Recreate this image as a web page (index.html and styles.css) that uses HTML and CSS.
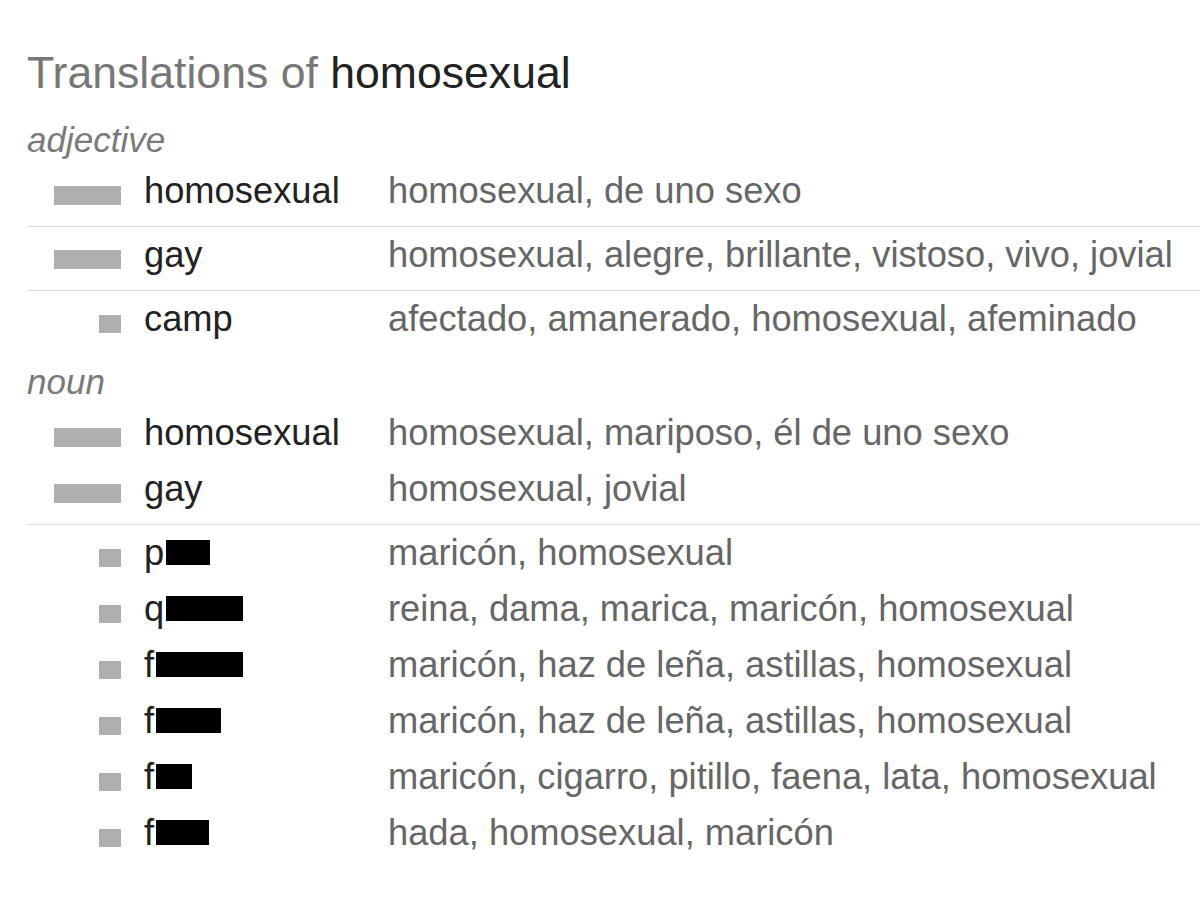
FILE: index.html
```html
<!DOCTYPE html>
<html lang="en">
<head>
<meta charset="utf-8">
<title>Translations of homosexual</title>
<link rel="stylesheet" href="styles.css">
</head>
<body>
<main class="panel">
  <h1 class="title">Translations of <span class="term">homosexual</span></h1>

  <section class="group">
    <div class="pos">adjective</div>
    <div class="row">
      <div class="freq"><span class="bar bar-big"></span></div>
      <div class="word">homosexual</div>
      <div class="trans">homosexual, de uno sexo</div>
    </div>
    <div class="row sep">
      <div class="freq"><span class="bar bar-big"></span></div>
      <div class="word">gay</div>
      <div class="trans">homosexual, alegre, brillante, vistoso, vivo, jovial</div>
    </div>
    <div class="row sep">
      <div class="freq"><span class="bar bar-small"></span></div>
      <div class="word">camp</div>
      <div class="trans">afectado, amanerado, homosexual, afeminado</div>
    </div>
  </section>

  <section class="group">
    <div class="pos">noun</div>
    <div class="row">
      <div class="freq"><span class="bar bar-big"></span></div>
      <div class="word">homosexual</div>
      <div class="trans">homosexual, mariposo, él de uno sexo</div>
    </div>
    <div class="row">
      <div class="freq"><span class="bar bar-big"></span></div>
      <div class="word">gay</div>
      <div class="trans">homosexual, jovial</div>
    </div>
    <div class="row sep">
      <div class="freq"><span class="bar bar-small"></span></div>
      <div class="word">p<span class="redact r-1"></span></div>
      <div class="trans">maricón, homosexual</div>
    </div>
    <div class="row">
      <div class="freq"><span class="bar bar-small"></span></div>
      <div class="word">q<span class="redact r-2"></span></div>
      <div class="trans">reina, dama, marica, maricón, homosexual</div>
    </div>
    <div class="row">
      <div class="freq"><span class="bar bar-small"></span></div>
      <div class="word">f<span class="redact r-3"></span></div>
      <div class="trans">maricón, haz de leña, astillas, homosexual</div>
    </div>
    <div class="row">
      <div class="freq"><span class="bar bar-small"></span></div>
      <div class="word">f<span class="redact r-4"></span></div>
      <div class="trans">maricón, haz de leña, astillas, homosexual</div>
    </div>
    <div class="row">
      <div class="freq"><span class="bar bar-small"></span></div>
      <div class="word">f<span class="redact r-5"></span></div>
      <div class="trans">maricón, cigarro, pitillo, faena, lata, homosexual</div>
    </div>
    <div class="row">
      <div class="freq"><span class="bar bar-small"></span></div>
      <div class="word">f<span class="redact r-6"></span></div>
      <div class="trans">hada, homosexual, maricón</div>
    </div>
  </section>
</main>
</body>
</html>
```

FILE: styles.css
```css
html, body {
  margin: 0;
  padding: 0;
  background: #ffffff;
}

body {
  font-family: "Liberation Sans", Arial, Helvetica, sans-serif;
  width: 1200px;
  height: 900px;
  overflow: hidden;
}

.panel {
  padding: 47px 0 0 27px;
}

.title {
  margin: 0 0 18px 0;
  font-size: 44.6px;
  line-height: 52px;
  font-weight: normal;
  color: #777777;
  white-space: nowrap;
}

.term {
  color: #222222;
}

.group + .group {
  margin-top: 12px;
}

.pos {
  font-size: 35px;
  line-height: 46px;
  font-style: italic;
  color: #7a7a7a;
}

.row {
  display: grid;
  grid-template-columns: 117px 244px 1fr;
  font-size: 36.3px;
  line-height: 56px;
  white-space: nowrap;
}

.row.sep {
  margin-top: 7px;
  border-top: 1px solid #dddddd;
}

.freq {
  text-align: right;
  padding-right: 23px;
}

.bar {
  display: inline-block;
  background: #afafaf;
  vertical-align: baseline;
  margin-bottom: -2px;
}

.bar-big {
  width: 67px;
  height: 19px;
}

.bar-small {
  width: 22px;
  height: 18px;
}

.word {
  color: #222222;
}

.trans {
  color: #666666;
}

.redact {
  display: inline-block;
  height: 25px;
  background: #000000;
  vertical-align: baseline;
  margin-left: 2px;
}

.r-1 { width: 44px; }
.r-2 { width: 77px; }
.r-3 { width: 87px; }
.r-4 { width: 65px; }
.r-5 { width: 36px; }
.r-6 { width: 53px; }
```
